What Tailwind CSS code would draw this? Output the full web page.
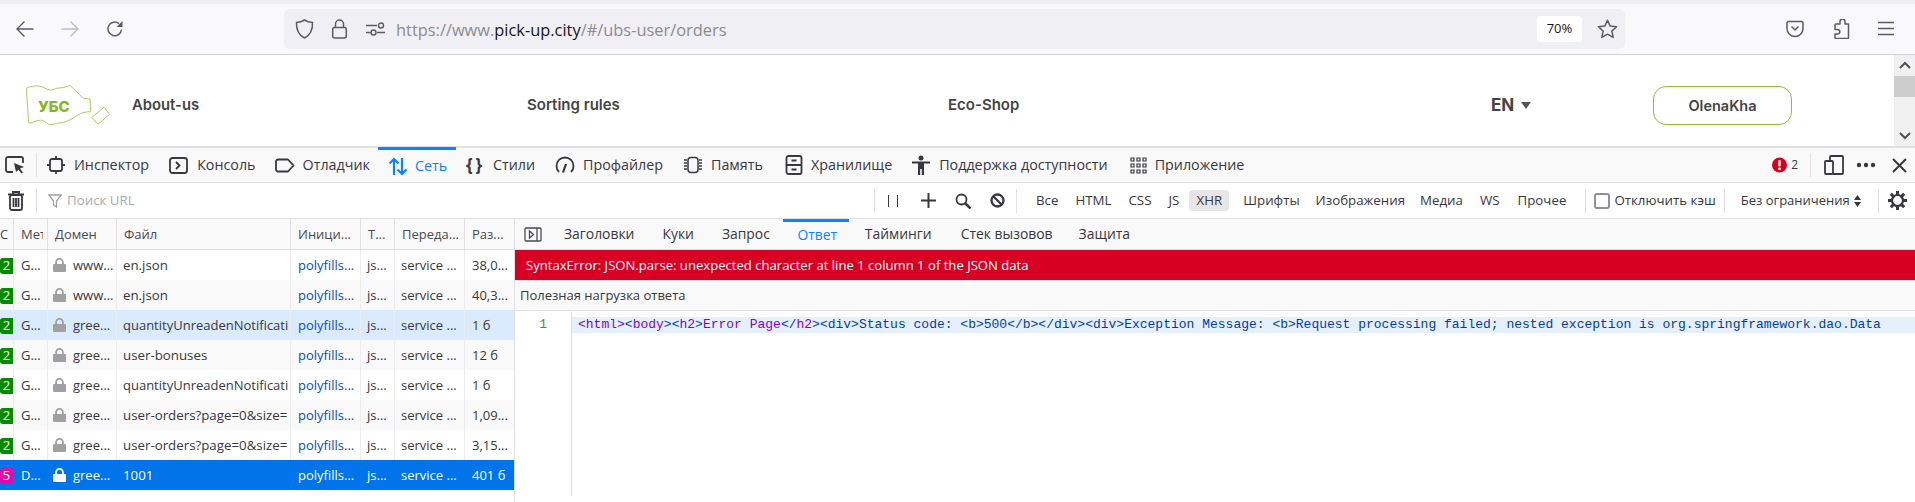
<!DOCTYPE html>
<html lang="ru">
<head>
  <meta charset="UTF-8" />
  <title>Сеть</title>
  <script src="https://cdn.jsdelivr.net/npm/@tailwindcss/browser@4"></script>
</head>
<body class="bg-white text-[#38383d] font-['Open_Sans',sans-serif] overflow-hidden">
<div class="w-[1915px] h-[502px] overflow-hidden flex flex-col">

  <!-- browser chrome -->
  <div class="h-1 bg-[#f0f0f0]"></div>
  <div class="h-[51px] bg-[#f9f9fb] border-b border-[#cfcfd8] flex items-start pt-[5px] shrink-0">
    <svg class="ml-4 mt-[11px]" width="18" height="18" viewBox="0 0 18 18" fill="none" stroke="#5b5b66" stroke-width="1.4"><path d="M17.5 9H1M8.5 1.5 1 9l7.5 7.5"/></svg>
    <svg class="ml-[27px] mt-[11px]" width="18" height="18" viewBox="0 0 18 18" fill="none" stroke="#bdbdc3" stroke-width="1.4"><path d="M.5 9H17M9.5 1.5 17 9l-7.5 7.5"/></svg>
    <svg class="ml-[27px] mt-[11px]" width="18" height="18" viewBox="0 0 18 18" fill="none" stroke="#5b5b66" stroke-width="1.5"><path d="M15.5 9.5A6.8 6.8 0 1 1 13 3.6"/><path d="M16.5 1v6h-6z" fill="#5b5b66" stroke="none"/></svg>
    <div class="ml-[160px] w-[1341px] h-10 bg-[#f0f0f4] rounded-md flex items-center relative">
      <svg class="ml-[11px]" width="19" height="20" viewBox="0 0 19 20" fill="none" stroke="#5b5b66" stroke-width="1.5"><path d="M9.5 1C7 2.6 4.500 3.300 1.500 3.500c-.3 7 2 12.500 8 15.500 6-3 8.300-8.500 8-15.500C14.500 3.300 12 2.600 9.500 1z"/></svg>
      <svg class="ml-[17px]" width="17" height="20" viewBox="0 0 17 20" fill="none" stroke="#5b5b66" stroke-width="1.500"><path d="M4.500 8.500V5a4 4 0 0 1 8 0v3.500"/><rect x="1.700" y="8.500" width="13.600" height="10.500" rx="2"/></svg>
      <svg class="ml-[18px]" width="19" height="14" viewBox="0 0 19 14" fill="none" stroke="#5b5b66" stroke-width="1.400"><path d="M0 3.500h11M0 10.500h4.500M11 10.500h8"/><circle cx="15" cy="3.500" r="2.500"/><circle cx="7.500" cy="10.500" r="2.500"/></svg>
      <div class="ml-[11px] pt-[2px] text-[16.4px] text-[#8b8b92]">https://www.<span class="text-[#15141a]">pick-up.city</span>/#/ubs-user/orders</div>
      <div class="ml-auto mr-[43px] w-[45px] h-[26px] bg-white rounded flex items-center justify-center text-[13px] text-[#15141a]">70%</div>
      <svg class="absolute right-[7px] top-[10px]" width="21" height="20" viewBox="0 0 21 20" fill="none" stroke="#5b5b66" stroke-width="1.500" stroke-linejoin="round"><path d="M10.500 1.200l2.700 5.900 6.400.7-4.800 4.300 1.400 6.300-5.700-3.200-5.700 3.200 1.400-6.300L1.400 7.800l6.400-.7z"/></svg>
    </div>
    <svg class="ml-[161px] mt-[11px]" width="18" height="18" viewBox="0 0 18 18" fill="none" stroke="#5b5b66" stroke-width="1.500"><path d="M2.500 1.500h13a1.500 1.500 0 0 1 1.500 1.500v5.500a8 8 0 0 1-16 0V3a1.500 1.500 0 0 1 1.500-1.500z"/><path d="M5.500 6.500 9 10l3.500-3.500"/></svg>
    <svg class="ml-[29px] mt-[10px]" width="17" height="20" viewBox="0 0 17 20" fill="none" stroke="#5b5b66" stroke-width="1.500" stroke-linejoin="round"><path d="M7 2.500a2.500 2.500 0 0 1 5 0V5h3.500v13.500a1 1 0 0 1-1 1H3a1 1 0 0 1-1-1V15h2.500a2.300 2.300 0 0 0 0-4.600H2V6a1 1 0 0 1 1-1h4z"/></svg>
    <svg class="ml-[28px] mt-[12px]" width="16" height="15" viewBox="0 0 16 15" fill="none" stroke="#5b5b66" stroke-width="1.500"><path d="M0 1.500h16M0 7.500h16M0 13.500h16"/></svg>
  </div>

  <!-- page header -->
  <div class="h-[91px] shrink-0 flex relative">
    <div class="w-[1894px] flex items-center font-['Inter',sans-serif] text-[#444] font-semibold">
      <svg class="absolute left-[26px] top-[30px]" width="85" height="41" viewBox="0 0 85 41" fill="none" stroke="#9ccb4a" stroke-width="0.900" stroke-linejoin="round">
        <path d="M.7 3C4 1.500 9 .5 13 1c4 .5 8 4 12 4.200 2 0 4-1.700 6-2C35 3 40 2 44 .5c4 3.500 9 9 13.600 12.800 2 .4 4 .5 6.400.7l.6 12.600c-3 .2-6 .5-9 1.400-5 2.500-11 7-16.600 9-5 .6-10 2-15 3-3-1.500-6-4.500-9-5-4 .3-8 2.300-12 3.300C2 33 2 27 1.500 20.500 1 14 .4 8 .7 3z"/>
        <path d="M78 22.300l5.500 7L72 39.300l-6.200-7z"/>
        <text x="12" y="27" fill="#83b81c" stroke="none" font-size="15" font-weight="800" font-family="Inter, sans-serif">УБС</text>
      </svg>
      <a class="absolute left-[132px] top-[39px] text-[14.800px]">About-us</a>
      <a class="absolute left-[527px] top-[39px] text-[15px]">Sorting rules</a>
      <a class="absolute left-[948px] top-[39px] text-[15px]">Eco-Shop</a>
      <div class="absolute left-[1491px] top-[38px] flex items-center font-bold text-[17px]">EN<span class="ml-[7px] w-0 h-0 border-x-[5px] border-x-transparent border-t-[7px] border-t-[#555]"></span></div>
      <button class="absolute left-[1653px] top-[31px] w-[139px] h-[39px] border border-[#8fbe2e] rounded-[13px] text-[14.500px] font-semibold">OlenaKha</button>
    </div>
    <div class="w-[21px] bg-[#f0f0f0] flex flex-col items-center">
      <svg class="mt-[6px]" width="12" height="8" viewBox="0 0 12 8" fill="none" stroke="#505050" stroke-width="2"><path d="M1 7l5-5 5 5"/></svg>
      <div class="mt-[7px] w-full h-[21px] bg-[#cdcdcd]"></div>
      <svg class="mt-auto mb-[6px]" width="12" height="8" viewBox="0 0 12 8" fill="none" stroke="#505050" stroke-width="2"><path d="M1 1l5 5 5-5"/></svg>
    </div>
  </div>

  <!-- devtools tabs -->
  <div class="h-[37px] shrink-0 border-t-2 border-[#e0e0e2] border-b bg-[#f9f9fa] flex items-center text-[14.300px] text-[#38383d] relative">
    <svg class="ml-[5px]" width="20" height="18" viewBox="0 0 20 18" fill="none" stroke="#38383d" stroke-width="1.800"><path d="M8 16H3a2 2 0 0 1-2-2V3a2 2 0 0 1 2-2h13a2 2 0 0 1 2 2v4"/><path d="M9 7l10 4-4 1.500 3 4-1.500 1-3-3.800L11 16z" fill="#38383d" stroke="none"/></svg>
    <div class="ml-[11px] w-px h-6 bg-[#e0e0e2]"></div>
    <svg class="ml-[10px]" width="18" height="18" viewBox="0 0 18 18" fill="none" stroke="#38383d" stroke-width="1.800"><rect x="3" y="3" width="12" height="12" rx="2"/><path d="M0 9h3M15 9h3M9 0v3M9 15v3"/></svg>
    <span class="ml-[9px]">Инспектор</span>
    <svg class="ml-[20px]" width="19" height="17" viewBox="0 0 19 17" fill="none" stroke="#38383d" stroke-width="1.800"><rect x="1" y="1" width="17" height="15" rx="2.500"/><path d="M7 5l3.500 3.500L7 12"/></svg>
    <span class="ml-[9px]">Консоль</span>
    <svg class="ml-[19px]" width="20" height="15" viewBox="0 0 20 15" fill="none" stroke="#38383d" stroke-width="1.800" stroke-linejoin="round"><path d="M3 1.500h10l5.500 6-5.500 6H3a2 2 0 0 1-2-2v-8a2 2 0 0 1 2-2z"/></svg>
    <span class="ml-[8px]">Отладчик</span>
    <div class="ml-[8px] h-[35px] w-[78px] border-t-[3px] border-[#0a84ff] flex items-center text-[#0a84ff] -mt-[1px]">
      <svg class="ml-[10px]" width="20" height="19" viewBox="0 0 20 19" fill="none" stroke="#0a84ff" stroke-width="2.200"><path d="M6 18V2M1.500 6.500 6 2l4.500 4.500M14 1v16M9.500 12.500 14 17l4.500-4.500"/></svg>
      <span class="ml-[7px]">Сеть</span>
    </div>
    <span class="ml-[10px] w-[19px] font-bold text-[17px] leading-none -mt-[2px]">{&thinsp;}</span>
    <span class="ml-[8px]">Стили</span>
    <svg class="ml-[20px]" width="20" height="18" viewBox="0 0 20 18" fill="none" stroke="#38383d" stroke-width="1.800"><path d="M4 16A8.500 8.500 0 1 1 16 16"/><path d="M8 16.500 11 8" stroke-width="2.200"/></svg>
    <span class="ml-[8px]">Профайлер</span>
    <svg class="ml-[20px]" width="20" height="18" viewBox="0 0 20 18" fill="none" stroke="#38383d" stroke-width="1.500"><rect x="5" y="1.500" width="10" height="15" rx="3"/><path d="M1 4h3M1 7h3M1 10h3M1 13h3M16 4h3M16 7h3M16 10h3M16 13h3"/></svg>
    <span class="ml-[8px]">Память</span>
    <svg class="ml-[22px]" width="18" height="20" viewBox="0 0 18 20" fill="none" stroke="#38383d" stroke-width="1.800"><rect x="1.500" y="1" width="15" height="18" rx="2"/><path d="M1.500 10h15M6.500 5.500h5M6.500 14.500h5"/></svg>
    <span class="ml-[8px]">Хранилище</span>
    <svg class="ml-[20px]" width="18" height="20" viewBox="0 0 18 20" fill="#38383d"><circle cx="9" cy="3" r="2.500"/><path d="M0 6.500h18v2h-6V20H9.800v-6H8.200v6H6V8.500H0z"/></svg>
    <span class="ml-[9px]">Поддержка доступности</span>
    <svg class="ml-[22px]" width="17" height="17" viewBox="0 0 17 17" fill="none" stroke="#38383d" stroke-width="1.200"><path d="M1 1h3v3H1zM7 1h3v3H7zM13 1h3v3h-3zM1 7h3v3H1zM7 7h3v3H7zM13 7h3v3h-3zM1 13h3v3H1zM7 13h3v3H7zM13 13h3v3h-3z"/></svg>
    <span class="ml-[8px]">Приложение</span>
    <div class="ml-auto flex items-center">
      <svg width="15" height="16" viewBox="0 0 15 16"><circle cx="7.500" cy="8" r="7.500" fill="#d7001f"/><rect x="6.300" y="3" width="2.400" height="6.500" rx="1" fill="#fff"/><circle cx="7.500" cy="11.800" r="1.400" fill="#fff"/></svg>
      <span class="ml-1 text-[12px]">2</span>
      <div class="ml-[12px] w-px h-6 bg-[#e0e0e2]"></div>
      <svg class="ml-[13px]" width="20" height="20" viewBox="0 0 20 20" fill="none" stroke="#38383d" stroke-width="1.800"><rect x="1" y="6" width="8" height="13" rx="1"/><path d="M6 6V2a1 1 0 0 1 1-1h11a1 1 0 0 1 1 1v16a1 1 0 0 1-1 1h-9"/></svg>
      <svg class="ml-[12px]" width="20" height="6" viewBox="0 0 20 6" fill="#38383d"><circle cx="3" cy="3" r="2.200"/><circle cx="10" cy="3" r="2.200"/><circle cx="17" cy="3" r="2.200"/></svg>
      <svg class="ml-[16px] mr-[8px]" width="15" height="15" viewBox="0 0 15 15" fill="none" stroke="#38383d" stroke-width="2"><path d="M1 1l13 13M14 1 1 14"/></svg>
    </div>
  </div>

  <!-- filter bar -->
  <div class="h-9 shrink-0 border-b border-[#e0e0e2] flex items-center text-[13.300px] text-[#38383d] whitespace-nowrap">
    <svg class="ml-2" width="16" height="20" viewBox="0 0 16 20" fill="none" stroke="#38383d" stroke-width="1.800"><path d="M0 3.500h16M5 3V1h6v2"/><rect x="2" y="4" width="12" height="15" rx="2"/><path d="M5.500 7v9M8 7v9M10.500 7v9"/></svg>
    <div class="ml-[12px] w-px h-6 bg-[#e0e0e2]"></div>
    <svg class="ml-[11px]" width="14" height="14" viewBox="0 0 14 14" fill="none" stroke="#a0a0a5" stroke-width="1.300"><path d="M.8 1h12.400L8.500 7v6l-3-2V7z"/></svg>
    <span class="ml-[5px] w-[66px] text-[#a9a9ad]">Поиск URL</span>
    <div class="ml-[741px] w-px h-6 bg-[#e0e0e2] shrink-0"></div>
    <svg class="ml-[12px] shrink-0" width="12" height="12" viewBox="0 0 12 12" stroke="#38383d" stroke-width="1"><path d="M1.500 0v12M10.500 0v12"/></svg>
    <svg class="ml-[22px] shrink-0" width="15" height="15" viewBox="0 0 15 15" stroke="#38383d" stroke-width="2"><path d="M7.500 0v15M0 7.500h15"/></svg>
    <svg class="ml-[19px] shrink-0" width="16" height="16" viewBox="0 0 16 16" fill="none" stroke="#38383d" stroke-width="1.800"><circle cx="6.500" cy="6.500" r="5"/><path d="M10 10l5.500 5.500" stroke-width="2.500"/></svg>
    <svg class="ml-[19px] shrink-0" width="15" height="15" viewBox="0 0 15 15" fill="none" stroke="#38383d" stroke-width="2.300"><circle cx="7.500" cy="7.500" r="6"/><path d="M3.500 3.500l8 8"/></svg>
    <div class="ml-[11px] w-px h-6 bg-[#e0e0e2] shrink-0"></div>
    <span class="ml-[19px]">Все</span>
    <span class="ml-[17px]">HTML</span>
    <span class="ml-[17px]">CSS</span>
    <span class="ml-[17px]">JS</span>
    <span class="ml-[10px] w-10 h-[21px] rounded-sm bg-[#e6e6e6] flex items-center justify-center shrink-0">XHR</span>
    <span class="ml-[14px]">Шрифты</span>
    <span class="ml-[16px]">Изображения</span>
    <span class="ml-[15px]">Медиа</span>
    <span class="ml-[17px]">WS</span>
    <span class="ml-[18px]">Прочее</span>
    <div class="ml-[19px] w-px h-6 bg-[#e0e0e2] shrink-0"></div>
    <span class="ml-[8px] w-4 h-4 rounded-[3px] border-2 border-[#8f8f9d] shrink-0"></span>
    <span class="ml-[4px]">Отключить кэш</span>
    <div class="ml-[8px] w-px h-6 bg-[#e0e0e2] shrink-0"></div>
    <span class="ml-[16px] text-[13px]">Без ограничения</span>
    <svg class="ml-[4px] shrink-0" width="7" height="12" viewBox="0 0 7 12" fill="#38383d"><path d="M3.500 0 7 5H0zM3.500 12 0 7h7z"/></svg>
    <div class="ml-[17px] w-px h-6 bg-[#e0e0e2] shrink-0"></div>
    <svg class="ml-[8px] shrink-0" width="21" height="21" viewBox="0 0 21 21" fill="none" stroke="#38383d"><circle cx="10.500" cy="10.500" r="5.500" stroke-width="2.200"/><path stroke-width="3" d="M10.500 1v4M10.500 16v4M1 10.500h4M16 10.500h4M3.800 3.800l3 3M14.200 14.200l3 3M17.200 3.800l-3 3M6.800 14.200l-3 3"/></svg>
  </div>

  <!-- network panel -->
  <div class="flex-1 flex min-h-0 text-[13px]">
    <div class="w-[514px] shrink-0">
      <div class="h-[31px] grid grid-cols-[13px_34px_69px_174px_70px_34px_70px_50px] bg-[#f9f9fa] border-b border-[#e0e0e2] items-center text-[#4a4a4f] [&>*]:h-full [&>*]:flex [&>*]:items-center [&>*]:pt-[2px] [&>*]:whitespace-nowrap [&>*]:overflow-hidden [&>div]:pl-[7px] [&>div]:border-l [&>div]:border-[#e0e0e2]">
        <span>С</span>
        <div><span class="w-[22px] overflow-hidden">Метод</span></div>
        <div>Домен</div>
        <div>Файл</div>
        <div>Иници...</div>
        <div>Т...</div>
        <div>Переда...</div>
        <div>Раз...</div>
      </div>
      <div id="rows"></div>
    </div>

    <!-- response panel -->
    <div class="flex-1 min-w-0 border-l border-[#e0e0e2] flex flex-col">
      <div class="h-[31px] shrink-0 bg-[#f9f9fa] border-b border-[#e0e0e2] flex items-center text-[13.900px] [&>span]:pt-px">
        <svg class="ml-[9px]" width="18" height="15" viewBox="0 0 18 15" fill="none" stroke="#4a4a4f" stroke-width="1.300"><rect x="1" y="1" width="16" height="13" rx="1"/><path d="M13 1v13"/><path d="M5.500 4l4 3.500-4 3.500z"/></svg>
        <span class="ml-[22px]">Заголовки</span>
        <span class="ml-[28px]">Куки</span>
        <span class="ml-[28px]">Запрос</span>
        <div class="ml-[13px] w-[66px] h-full border-t-[3px] border-[#0a84ff] flex items-center justify-center pl-[3px] text-[#0a84ff]">Ответ</div>
        <span class="ml-[16px]">Тайминги</span>
        <span class="ml-[29px]">Стек вызовов</span>
        <span class="ml-[26px]">Защита</span>
      </div>
      <div class="h-[30px] shrink-0 bg-[#d70022] text-white text-[13.100px] flex items-center pl-[11px] pt-[2px]">SyntaxError: JSON.parse: unexpected character at line 1 column 1 of the JSON data</div>
      <div class="h-[31px] shrink-0 bg-[#f9f9fa] border-y border-[#e0e0e2] flex items-center pl-[5px] pt-px text-[13px]">Полезная нагрузка ответа</div>
      <div class="flex-1 flex pt-[6px] font-['Liberation_Mono',monospace] text-[13px] leading-[16px] overflow-hidden">
        <div class="w-[57px] shrink-0 h-full border-r border-[#e0e0e2] text-[#737373] text-right pr-[24px] -mt-[6px] pt-[6px]">1</div>
        <div class="flex-1 h-4 bg-[#e6f0fb] pl-[6px] whitespace-nowrap overflow-hidden text-[#003eaa]"><span class="text-[#8000d7]">&lt;html&gt;</span>&lt;<span class="text-[#8000d7]">body</span>&gt;&lt;<span class="text-[#8000d7]">h2</span>&gt;<span class="text-[#8000d7]">Error Page</span>&lt;/<span class="text-[#8000d7]">h2</span>&gt;&lt;div&gt;Status code: &lt;b&gt;500&lt;/b&gt;&lt;/div&gt;&lt;div&gt;Exception Message: &lt;b&gt;Request processing failed; nested exception is org.springframework.dao.Data</div>
      </div>
    </div>
  </div>
</div>

<script>
  const rows = [
    ['www...', 'en.json', '38,0...', 'bg-white', 'text-[13.300px]'],
    ['www...', 'en.json', '40,3...', 'bg-[#f9f9fa]', 'text-[13.300px]'],
    ['gree...', 'quantityUnreadenNotificati', '1 б', 'bg-[#d9ebfd]', 'text-[13px]'],
    ['gree...', 'user-bonuses', '12 б', 'bg-[#f9f9fa]', 'text-[13.300px]'],
    ['gree...', 'quantityUnreadenNotificati', '1 б', 'bg-white', 'text-[13px]'],
    ['gree...', 'user-orders?page=0&amp;size=', '1,09...', 'bg-[#f9f9fa]', 'text-[13.300px]'],
    ['gree...', 'user-orders?page=0&amp;size=', '3,15...', 'bg-white', 'text-[13.300px]'],
  ];
  const rowClass = 'h-[30px] grid grid-cols-[13px_34px_69px_174px_70px_34px_70px_50px] items-center [&>*]:flex [&>*]:items-center [&>*]:whitespace-nowrap [&>*]:overflow-hidden';
  const lock = (fill) => `<svg class="shrink-0" width="13" height="14" viewBox="0 0 13 14" fill="${fill}"><path d="M6.500 0A4.300 4.300 0 0 0 2.200 4.300V6H1a1 1 0 0 0-1 1v6a1 1 0 0 0 1 1h11a1 1 0 0 0 1-1V7a1 1 0 0 0-1-1h-1.200V4.300A4.300 4.300 0 0 0 6.500 0zM4 6V4.300a2.500 2.500 0 0 1 5 0V6z"/></svg>`;
  const rowHtml = (m, domain, file, size, bg, fileSize, badge, code, text, border, link, lockFill) => `
    <div class="${rowClass} ${bg} ${text}">
      <div class="h-4 mt-px ${badge} rounded-l-[3px] text-white justify-center text-[13px]">${code}</div>
      <div class="h-full pl-[7px] pt-[2px] border-l ${border}">${m}</div>
      <div class="h-full pl-[5px] border-l ${border}">${lock(lockFill)}<span class="ml-[7px] pt-[2px]">${domain}</span></div>
      <div class="h-full pl-[6px] pt-[2px] border-l ${border} ${fileSize}">${file}</div>
      <div class="h-full pl-[7px] pt-[2px] border-l ${border} ${link}">polyfills...</div>
      <div class="h-full pl-[6px] pt-[2px] border-l ${border}">js...</div>
      <div class="h-full pl-[6px] pt-[2px] border-l ${border}">service ...</div>
      <div class="h-full pl-[7px] pt-[2px] border-l ${border}">${size}</div>
    </div>`;
  document.getElementById('rows').innerHTML =
    rows.map(([d, f, s, bg, fs]) => rowHtml('G...', d, f, s, bg, fs, 'bg-[#058b00]', '2', 'text-[#38383d]', 'border-[#ededf0]', 'text-[#0a4fb5]', '#a0a0a2')).join('') +
    rowHtml('D...', 'gree...', '1001', '401 б', 'bg-[#0074e8]', 'text-[13.300px]', 'bg-[#e20aa8]', '5', 'text-white', 'border-transparent', 'text-white', '#fff');
</script>
</body>
</html>
